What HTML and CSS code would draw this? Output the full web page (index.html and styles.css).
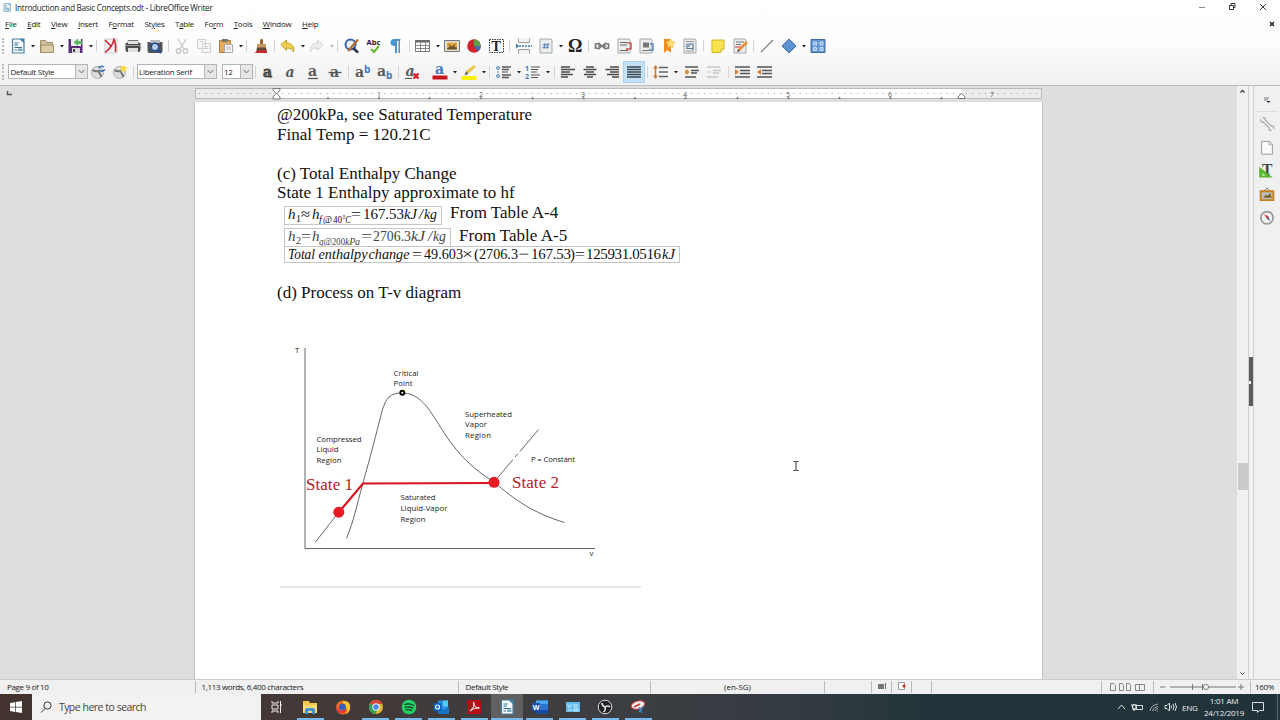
FILE: index.html
```
<!DOCTYPE html>
<html lang="en">

<head>
    <meta charset="UTF-8">
    <title>Introduction and Basic Concepts.odt - LibreOffice Writer</title>
    <link rel="stylesheet" href="styles.css">
</head>

<body>
    <svg class="defs">
        <symbol id="writer" viewBox="0 0 22 22">
            <path d="M5.500 4h8l3.500 3.500V18H5.500z" fill="#f8fbfc" stroke="#4d7f9d" stroke-width="1.200" />
            <path d="M13 3.500h4.500V8z" fill="#2e86b8" />
            <path d="M7.500 8h4M7.500 10h3.500M7.500 12.500h7.500M7.500 15h2.500" stroke="#2f7199" />
            <path d="M11 13.500h4.500V16H11z" fill="#6fa9c6" />
        </symbol>
        <symbol id="doc" viewBox="0 0 22 22">
            <path d="M5 4h11l1 1v13H5z" fill="#eceeee" stroke="#a4a7a8" />
        </symbol>
        <symbol id="arrow" viewBox="0 0 7 22">
            <path d="M2 10h4l-2 2.4z" fill="#222" />
        </symbol>
        <symbol id="chev" viewBox="0 0 12 14">
            <path d="M3 5.5l3 3 3-3" fill="none" stroke="#555" />
        </symbol>
    </svg>

    <!-- Title and menu -->
    <div class="top">
        <div class="titlebar">
            <svg class="app-icon"><use href="#writer" /></svg>
            <span class="title">Introduction and Basic Concepts.odt - LibreOffice Writer</span>
            <svg class="window-buttons" width="76" height="14" fill="none" stroke="#333">
                <path d="M3 7.500h6" stroke="#888" />
                <path d="M33.500 5.500h4v4h-4zM35 5.500v-2h4v4h-1.500" />
                <path d="M64 4l6 6M70 4l-6 6" />
            </svg>
        </div>
        <div class="menubar">
            <span><u>F</u>ile</span><span><u>E</u>dit</span><span><u>V</u>iew</span><span><u>I</u>nsert</span>
            <span>F<u>o</u>rmat</span><span>St<u>y</u>les</span><span>T<u>a</u>ble</span><span>Fo<u>r</u>m</span>
            <span><u>T</u>ools</span><span><u>W</u>indow</span><span><u>H</u>elp</span>
            <svg class="close-doc" width="8" height="8"><path d="M2 2l4 4M6 2l-4 4" stroke="#222" stroke-width="1.5" /></svg>
        </div>

        <!-- Standard toolbar -->
        <div class="toolbar">
            <i class="grip"></i>
            <svg class="ic"><use href="#writer" /></svg>
            <svg class="ar"><use href="#arrow" /></svg>
            <svg class="ic" viewBox="0 0 22 22">
                <path d="M4.500 17.500v-12h5l1 2h6v10z" fill="#cfc09e" stroke="#a08f6a" />
                <path d="M5 17.500V10h12.500v7.500z" fill="#dccdab" stroke="#a08f6a" />
            </svg>
            <svg class="ar"><use href="#arrow" /></svg>
            <svg class="ic" viewBox="0 0 22 22">
                <path d="M3.500 4h14v14h-14z" fill="#5b2d78" />
                <path d="M6 4h10v7H6z" fill="#eceff0" />
                <path d="M7 13h8v5H7z" fill="#ddd" />
                <path d="M8 14h2v3H8z" fill="#444" />
                <path d="M17 6h-4V3.500L8.500 7.500l4.500 3.500V9h4z" fill="#5cb85c" />
            </svg>
            <svg class="ar"><use href="#arrow" /></svg>
            <i class="sep"></i>
            <svg class="ic" viewBox="0 0 22 22">
                <path d="M5 4h12v14H5z" fill="#f4f4f4" stroke="#ccc" />
                <path d="M5 17.500c4-3 8-8 9-13q2 3 1.500 12.500M5 5l6 6" fill="none" stroke="#c8202e" stroke-width="1.500" />
            </svg>
            <svg class="ic" viewBox="0 0 22 22">
                <path d="M6 5h10l1 4H5z" fill="#777" />
                <path d="M3.500 8h15v7l-1 2h-13l-1-2z" fill="#4b4d4f" />
                <path d="M6 6h10v3H6zM6 13h10v4H6z" fill="#dfe1e2" />
                <path d="M4 10.500h14" stroke="#999" />
            </svg>
            <svg class="ic" viewBox="0 0 22 22">
                <path d="M3.500 7h15v9l-1 2h-13l-1-2z" fill="#515559" />
                <path d="M6 5h10v3H6z" fill="#b6babd" />
                <circle cx="11" cy="12" r="3.700" fill="#b8d0ef" stroke="#244f96" stroke-width="1.600" />
                <path d="M14 15l3 3" stroke="#244f96" stroke-width="2" />
            </svg>
            <i class="sep"></i>
            <svg class="ic" viewBox="0 0 22 22" fill="none" stroke="#c9c9c9" stroke-width="1.400">
                <path d="M7 4l6 10M15 4L9 14" />
                <circle cx="7.500" cy="16" r="2.200" /><circle cx="14.500" cy="16" r="2.200" />
            </svg>
            <svg class="ic" viewBox="0 0 22 22" fill="#f7f7f7" stroke="#cfcfcf">
                <path d="M4.500 4.500h8v9h-8zM9.500 8.500h8v9h-8z" />
                <path d="M11.500 11.500h4M11.500 13.500h4M6.500 6.500h4" />
            </svg>
            <svg class="ic" viewBox="0 0 22 22">
                <path d="M4.500 5.500h11v12h-11z" fill="#e2aa5c" stroke="#b87a30" />
                <path d="M7 4h6v3H7z" fill="#777" />
                <path d="M9.500 9.500h8v8h-8z" fill="#f5f5f5" stroke="#aaa" />
                <path d="M11 12h5M11 14h5" stroke="#bbb" />
            </svg>
            <svg class="ar"><use href="#arrow" /></svg>
            <i class="sep"></i>
            <svg class="ic" viewBox="0 0 22 22">
                <path d="M10 4.500q2-1 3 0v5h-3z" fill="#9a6530" />
                <path d="M7 9h9v4H7z" fill="#c99a62" />
                <path d="M7 12.500h9l1 5H6z" fill="#60483a" />
                <path d="M4 18l5-2.500h8V18z" fill="#d8262c" />
            </svg>
            <i class="sep"></i>
            <svg class="ic" viewBox="0 0 22 22">
                <path d="M4 9.500L9.500 5v3c6 0 8 4 7 9-1-3-3-4-7-4v2.500z" fill="#f1cf4e" stroke="#bd9420" stroke-width=".9" />
            </svg>
            <svg class="ar"><use href="#arrow" /></svg>
            <svg class="ic" viewBox="0 0 22 22">
                <path d="M17 9.500L11.500 5v3c-6 0-8 4-7 9 1-3 3-4 7-4v2.500z" fill="#ececec" stroke="#d4d4d4" stroke-width=".9" />
            </svg>
            <svg class="ar faded"><use href="#arrow" /></svg>
            <i class="sep"></i>
            <svg class="ic" viewBox="0 0 22 22">
                <circle cx="9.500" cy="9.500" r="5" fill="#e8eff6" stroke="#3a64a8" stroke-width="2" />
                <path d="M12 13l5 4.500" stroke="#28324a" stroke-width="2.600" />
                <path d="M17 4.500L7 16" stroke="#b5652c" stroke-width="2" />
            </svg>
            <svg class="ic" viewBox="0 0 22 22">
                <text x="3.500" y="10" class="abc">Abc</text>
                <path d="M8 14l3 3 5-6" fill="none" stroke="#63b52f" stroke-width="2" />
            </svg>
            <svg class="ic" viewBox="0 0 22 22">
                <path d="M15.500 4H9.500q-4 0-4 3.500t4.500 3.500V18h2V6h1.500v12h1.500V5.500h.5z" fill="#4a93cc" />
            </svg>
            <i class="sep"></i>
            <svg class="ic" viewBox="0 0 22 22">
                <path d="M3.500 5.500h14v11h-14z" fill="#fff" stroke="#777" />
                <path d="M3 6.500h15" stroke="#666" stroke-width="2" />
                <path d="M3.500 10.500h14M3.500 13.500h14M8.500 6v10M13.500 6v10" stroke="#888" />
            </svg>
            <svg class="ar"><use href="#arrow" /></svg>
            <svg class="ic" viewBox="0 0 22 22">
                <path d="M3.500 5.500h15v11h-15z" fill="#e0e0dd" stroke="#777" />
                <path d="M6 7.500h10v7H6z" fill="#e5a93c" />
                <path d="M6 14.500v-1l3-2-2-3 4 3 4-3.500-2 3.500 3 1v2z" fill="#6c552d" />
            </svg>
            <svg class="ic" viewBox="0 0 22 22">
                <circle cx="11" cy="11" r="6.800" fill="#d3222b" />
                <path d="M11 11V4.200A6.800 6.800 0 0 1 17.800 11z" fill="#54a546" />
                <path d="M11 11h6.800a6.800 6.800 0 0 1-3 5.600z" fill="#3f6db5" />
            </svg>
            <svg class="ic" viewBox="0 0 22 22">
                <path d="M4.500 4.500h14v13h-14z" fill="#fff" stroke="#333" stroke-dasharray="1.500 1" />
                <text x="6.500" y="16" class="big-t">T</text>
            </svg>
            <i class="sep"></i>
            <svg class="ic" viewBox="0 0 22 22">
                <path d="M5.500 3.500v4h11v-4M5.500 18.500v-4h11v4" fill="#f3f3f3" stroke="#999" />
                <path d="M3 11h16" stroke="#3d76ae" stroke-width="1.600" stroke-dasharray="2 1" />
                <path d="M3 8.500l3 2.500-3 2.500z" fill="#3d76ae" />
            </svg>
            <svg class="ic" viewBox="0 0 22 22">
                <use href="#doc" />
                <path d="M10 8l-1 6M13 8l-1 6M8 9.800h6.500M7.500 12.300H14" stroke="#4f7bb0" stroke-width=".9" />
            </svg>
            <svg class="ar"><use href="#arrow" /></svg>
            <svg class="ic" viewBox="0 0 22 22"><text x="4" y="17" class="omega">Ω</text></svg>
            <i class="sep"></i>
            <svg class="ic" viewBox="0 0 22 22" fill="none" stroke="#777" stroke-width="1.700">
                <path d="M4.500 9l3.500-.5 2.500 2.500L8 13.500 4.500 13zM17.500 9l-3.500-.5-2.500 2.500 2.500 2.500 3.500-.5z" /><path d="M7 11h8" />
            </svg>
            <svg class="ic" viewBox="0 0 22 22">
                <use href="#doc" />
                <path d="M7 7.500h7M7 10h7M7 15.500h8" stroke="#666" />
                <path d="M14 8h4v6h-4M14 16v-3" fill="none" stroke="#c8282e" stroke-width="1.200" />
            </svg>
            <svg class="ic" viewBox="0 0 22 22">
                <use href="#doc" />
                <path d="M8 7.500h6v5H8z" fill="#777" />
                <path d="M15 9h3v6h-4" fill="none" stroke="#4a80bd" stroke-width="1.300" />
                <path d="M7 15.500h7" stroke="#777" />
            </svg>
            <svg class="ic" viewBox="0 0 22 22">
                <path d="M7 4h7v14l-3.500-3L7 18z" fill="#ee8e21" />
                <path d="M13.500 4l1.500 2.500 3 .5-2 2.500v3l-2.500-1-2.500 1v-3L9 7l3-.5z" fill="#ffe075" stroke="#f0b23a" stroke-width=".6" />
            </svg>
            <svg class="ic" viewBox="0 0 22 22">
                <use href="#doc" />
                <path d="M7 6.500h8M7 16h8" stroke="#999" />
                <path d="M8 8.500v5h6M10 12V9h4v6" fill="none" stroke="#58779c" stroke-width="1.200" />
            </svg>
            <i class="sep"></i>
            <svg class="ic" viewBox="0 0 22 22">
                <path d="M5 5h12v9l-3.500 3.500H5z" fill="#f8e34d" stroke="#cdb428" />
                <path d="M13.500 17.500V14H17z" fill="#fff5a6" stroke="#cdb428" stroke-width=".7" />
            </svg>
            <svg class="ic" viewBox="0 0 22 22">
                <use href="#doc" />
                <path d="M7 7h8M7 9.500h5" stroke="#777" />
                <path d="M6 12h6" stroke="#d43831" />
                <path d="M18 7l-8 8" stroke="#ed8c3c" stroke-width="2.600" />
                <path d="M8 17l1-3 2 2z" fill="#443" />
            </svg>
            <i class="sep"></i>
            <svg class="ic" viewBox="0 0 22 22"><path d="M5 17L17 5" stroke="#777" stroke-width="1.200" /></svg>
            <svg class="ic" viewBox="0 0 22 22"><path d="M11 4l7 7-7 7-7-7z" fill="#5e91cf" stroke="#3d6da8" /></svg>
            <svg class="ar"><use href="#arrow" /></svg>
            <svg class="ic" viewBox="0 0 22 22">
                <path d="M4 4.500h14v13H4z" fill="#6597d2" stroke="#3d6da8" />
                <path d="M6.500 7h3v3h-3zM13 7h3v3h-3zM6.500 12.500h3v3h-3zM13 12.500h3v3h-3z" fill="#8fb6e2" stroke="#dce9f7" stroke-width=".8" />
            </svg>
        </div>

        <!-- Formatting toolbar -->
        <div class="toolbar format">
            <i class="grip"></i>
            <div class="combo style-name"><span>Default Style</span><svg><use href="#chev" /></svg></div>
            <svg class="ic" viewBox="0 0 22 22">
                <circle cx="10.500" cy="11.500" r="6" fill="#dedede" stroke="#aaa" />
                <path d="M5.500 9q3 2 6 1l3 6" fill="none" stroke="#777" stroke-width="2" />
                <path d="M11.500 7q2.500-3 5.500-1M18 8.500q-3 3-6 .5" fill="none" stroke="#3a70b4" stroke-width="1.500" />
            </svg>
            <svg class="ic" viewBox="0 0 22 22">
                <circle cx="10.500" cy="11.500" r="6" fill="#dedede" stroke="#aaa" />
                <path d="M5.500 9q3 2 6 1l3 6" fill="none" stroke="#777" stroke-width="2" />
                <path d="M14.500 4l1.300 2 2.700.3-1.800 1.900v2.600l-2.200-.9-2.200.9V8.200l-1.800-1.900 2.700-.3z" fill="#f6dc3e" />
            </svg>
            <i class="sep"></i>
            <div class="combo font-name"><span>Liberation Serif</span><svg><use href="#chev" /></svg></div>
            <div class="combo font-size"><span>12</span><svg><use href="#chev" /></svg></div>
            <i class="sep"></i>
            <svg class="ic" viewBox="0 0 22 22"><text x="5" y="16" class="glyph heavy">a</text></svg>
            <svg class="ic" viewBox="0 0 22 22"><text x="5.500" y="16" class="glyph slant">a</text></svg>
            <svg class="ic" viewBox="0 0 22 22"><text x="6" y="15" class="glyph">a</text><path d="M6 17.500h10" stroke="#555" stroke-width="1.300" /></svg>
            <svg class="ic" viewBox="0 0 22 22"><text x="6" y="16" class="glyph">a</text><path d="M4.500 11.500h13" stroke="#555" stroke-width="1.300" /></svg>
            <i class="sep"></i>
            <svg class="ic" viewBox="0 0 22 22"><text x="3" y="16" class="glyph">a</text><text x="12" y="12" class="script">b</text></svg>
            <svg class="ic" viewBox="0 0 22 22"><text x="3" y="15" class="glyph">a</text><text x="12" y="18" class="script">b</text></svg>
            <i class="sep"></i>
            <svg class="ic" viewBox="0 0 22 22"><text x="4.500" y="15" class="glyph slant">a</text><path d="M4 17.500h7" stroke="#555" /><path d="M12.500 12.500l5 5M17.500 12.500l-5 5" stroke="#d8202a" stroke-width="2.400" /></svg>
            <i class="sep blank"></i>
            <svg class="ic" viewBox="0 0 22 22"><text x="6" y="13" class="glyph blue">a</text><path d="M3.500 16.500h15" stroke="#c9141b" stroke-width="4" /></svg>
            <svg class="ar"><use href="#arrow" /></svg>
            <svg class="ic" viewBox="0 0 22 22">
                <path d="M16 4l-8 6 2 3 8-7z" fill="#e6c94c" /><path d="M8 10l2.500 3-4 1.500z" fill="#686868" />
                <path d="M3.500 17h15" stroke="#fdf200" stroke-width="4" />
            </svg>
            <svg class="ar"><use href="#arrow" /></svg>
            <i class="sep wide"></i>
            <svg class="ic" viewBox="0 0 22 22">
                <path d="M9 6h9M9 8.500h7M9 14h9M9 16.500h7" stroke="#555" stroke-width="1.300" />
                <circle cx="5" cy="7" r="1.400" fill="#fff" stroke="#3c78b4" /><circle cx="5" cy="15" r="1.400" fill="#fff" stroke="#3c78b4" /><circle cx="5" cy="11" r=".8" fill="#3c78b4" />
                <path d="M9 11h6" stroke="#555" />
            </svg>
            <svg class="ar"><use href="#arrow" /></svg>
            <svg class="ic" viewBox="0 0 22 22">
                <text x="3" y="10" class="num">1</text><text x="3" y="18" class="num">2</text>
                <path d="M9 6h9M9 8.500h7M9 11h6M9 14h9M9 16.500h7" stroke="#555" stroke-width="1.200" />
            </svg>
            <svg class="ar"><use href="#arrow" /></svg>
            <i class="sep"></i>
            <svg class="ic" viewBox="0 0 22 22"><path d="M4 6h9M4 8.500h14M4 11h9M4 13.500h12M4 16h7" stroke="#4a4a4a" stroke-width="1.400" /></svg>
            <svg class="ic" viewBox="0 0 22 22"><path d="M7 6h8M4.500 8.500h13M7 11h8M5 13.500h12M8 16h6" stroke="#4a4a4a" stroke-width="1.400" /></svg>
            <svg class="ic" viewBox="0 0 22 22"><path d="M9 6h9M4.500 8.500h13.500M9 11h9M6 13.500h12M11 16h7" stroke="#4a4a4a" stroke-width="1.400" /></svg>
            <svg class="ic active" viewBox="0 0 22 22"><path d="M4 6h14M4 8.500h14M4 11h14M4 13.500h14M4 16h14" stroke="#3c4650" stroke-width="1.400" /></svg>
            <i class="sep"></i>
            <svg class="ic" viewBox="0 0 22 22">
                <path d="M9 6.500h9M9 11h9M9 15.500h9" stroke="#666" stroke-width="1.400" />
                <path d="M5.500 7v8" stroke="#d0762c" stroke-width="1.500" /><path d="M5.500 4L3 7.500h5zM5.500 18L3 14.500h5z" fill="#d0762c" />
            </svg>
            <svg class="ar"><use href="#arrow" /></svg>
            <i class="sep blank small"></i>
            <svg class="ic" viewBox="0 0 22 22"><path d="M4 6h13M10 9.500h8M10 12h6M4 16h11" stroke="#555" stroke-width="1.400" /><path d="M6 8l2.500 3L6 14l-2.500-3z" fill="#e08a35" /></svg>
            <svg class="ic faded" viewBox="0 0 22 22"><path d="M4 6h13M10 9.500h8M10 12h6M4 16h11" stroke="#777" stroke-width="1.300" /><path d="M4 11h4" stroke="#777" /></svg>
            <i class="sep"></i>
            <svg class="ic" viewBox="0 0 22 22"><path d="M4 6h15M9 9.500h10M9 12.500h10M4 16h15" stroke="#555" stroke-width="1.500" /><path d="M4 8l4 3-4 3z" fill="#e0782c" /></svg>
            <svg class="ic" viewBox="0 0 22 22"><path d="M4 6h15M9 9.500h10M9 12.500h10M4 16h15" stroke="#555" stroke-width="1.500" /><path d="M8 8l-4 3 4 3z" fill="#e0782c" /></svg>
        </div>
    </div>

    <!-- Document area -->
    <div class="workspace">
        <div class="canvas">
            <div class="ruler-row">
                <svg class="tab-mark" width="8" height="8"><path d="M1.500 1v3.500H6" fill="none" stroke="#555" stroke-width="1.500" /></svg>
                <svg class="ruler" width="847" height="12">
                    <rect x=".5" y=".5" width="846" height="10" fill="#fff" stroke="#bbb" />
                    <path d="M1 1h80v9H1zM767 1h79v9h-79z" fill="#ececec" />
                    <path d="M4 5.500h840" stroke="#999" stroke-dasharray="1 5.390" />
                    <path d="M181 2h6v7h-6zM283 2h6v7h-6zM385 2h6v7h-6zM487 2h6v7h-6zM590 2h6v7h-6zM692 2h6v7h-6z" fill="#fff" />
                    <g class="ruler-num">
                        <text x="184" y="8.500">1</text><text x="286" y="8.500">2</text><text x="388" y="8.500">3</text>
                        <text x="490" y="8.500">4</text><text x="593" y="8.500">5</text><text x="695" y="8.500">6</text><text x="797" y="8.500">7</text>
                    </g>
                    <path d="M131.500 11l1.500-2.500 1.500 2.500zM182.500 11l1.500-2.500 1.500 2.500zM233 11l1.500-2.500 1.500 2.500zM284.500 11l1.500-2.500 1.500 2.500zM336 11l1.500-2.500 1.500 2.500zM387 11l1.500-2.500 1.500 2.500zM438.500 11l1.500-2.500 1.500 2.500zM489 11l1.500-2.500 1.500 2.500zM541 11l1.500-2.500 1.500 2.500zM592 11l1.500-2.500 1.500 2.500zM643 11l1.500-2.500 1.500 2.500zM694 11l1.500-2.500 1.500 2.500zM745 11l1.500-2.500 1.500 2.500z" fill="#777" />
                    <path d="M78 .5h7v1.500l-3 3.500 3 3.500v2h-7V9l3-3.500-3-3.500z" fill="#fff" stroke="#777" />
                    <path d="M763 10.500V9l3.500-3.500L770 9v1.500z" fill="#fff" stroke="#777" />
                </svg>
            </div>
            <div class="page">
                <p>@200kPa, see Saturated Temperature</p>
                <p>Final Temp = 120.21C</p>
                <p>&nbsp;</p>
                <p>(c) Total Enthalpy Change</p>
                <p>State 1 Enthalpy approximate to hf</p>
                <div class="eq-row first">
                    <svg class="formula" width="158" height="19">
                        <g class="it"><text x="4" y="13">h</text><text x="28" y="13">h</text><text x="120" y="13" textLength="13" lengthAdjust="spacingAndGlyphs">kJ</text><text x="135" y="13">/</text><text x="140" y="13" textLength="13" lengthAdjust="spacingAndGlyphs">kg</text></g>
                        <text x="12" y="16" class="sub">1</text>
                        <text x="17" y="13" textLength="9" lengthAdjust="spacingAndGlyphs">≈</text>
                        <text x="35" y="17" class="sub it" textLength="13">f@</text><text x="49" y="17" class="sub" textLength="9" lengthAdjust="spacingAndGlyphs">40</text><text x="58" y="17" class="sub it" textLength="9" lengthAdjust="spacingAndGlyphs">°C</text>
                        <text x="67" y="13" textLength="10" lengthAdjust="spacingAndGlyphs">=</text>
                        <text x="79" y="13" textLength="41">167.53</text>
                    </svg>
                    <span>From Table A-4</span>
                </div>
                <div class="eq-row second">
                    <svg class="formula light" width="167" height="19">
                        <g class="it"><text x="4" y="13">h</text><text x="28" y="13">h</text><text x="127" y="13" textLength="14" lengthAdjust="spacingAndGlyphs">kJ</text><text x="144" y="13">/</text><text x="149" y="13" textLength="13" lengthAdjust="spacingAndGlyphs">kg</text></g>
                        <text x="12" y="16" class="sub">2</text>
                        <text x="17" y="13" textLength="10" lengthAdjust="spacingAndGlyphs">=</text>
                        <text x="35" y="17" class="sub it" textLength="13" lengthAdjust="spacingAndGlyphs">g@</text><text x="48" y="17" class="sub" textLength="13" lengthAdjust="spacingAndGlyphs">200</text><text x="61" y="17" class="sub it" textLength="15">kPa</text>
                        <text x="77" y="13" textLength="11" lengthAdjust="spacingAndGlyphs">=</text>
                        <text x="89" y="13" textLength="38" lengthAdjust="spacingAndGlyphs">2706.3</text>
                    </svg>
                    <span>From Table A-5</span>
                </div>
                <div class="eq-row third">
                    <svg class="formula" width="396" height="17">
                        <g class="it"><text x="4" y="13" textLength="27" lengthAdjust="spacingAndGlyphs">Total</text><text x="34.500" y="13" textLength="49" lengthAdjust="spacingAndGlyphs">enthalpy</text><text x="84.500" y="13" textLength="41" lengthAdjust="spacingAndGlyphs">change</text><text x="378" y="13" textLength="13" lengthAdjust="spacingAndGlyphs">kJ</text></g>
                        <text x="128" y="13" textLength="10" lengthAdjust="spacingAndGlyphs">=</text>
                        <text x="140" y="13" textLength="39" lengthAdjust="spacingAndGlyphs">49.603</text>
                        <text x="178" y="13" textLength="11" lengthAdjust="spacingAndGlyphs">×</text>
                        <text x="190" y="13">(</text><text x="195" y="13" textLength="39" lengthAdjust="spacingAndGlyphs">2706.3</text>
                        <text x="234" y="13" textLength="11" lengthAdjust="spacingAndGlyphs">−</text>
                        <text x="247" y="13" textLength="40">167.53</text><text x="286" y="13">)</text>
                        <text x="291" y="13" textLength="10" lengthAdjust="spacingAndGlyphs">=</text>
                        <text x="302" y="13" textLength="75">125931.0516</text>
                    </svg>
                </div>
                <p class="part-d">(d) Process on T-v diagram</p>

                <!-- T-v diagram -->
                <svg class="diagram" viewBox="280 335 361 253" width="361" height="253">
                    <g fill="none" stroke="#666">
                        <path d="M305 348v200.500h290" />
                        <path d="M346.500 538.500C354 520 356 508 363 483C371 454 376 435 382 411C386 398 390 393 402 393C417 393 426 404 436 420C452 446 465 464 494 482C515 500 533 513 564.500 522.500" />
                        <path d="M315.500 542L338 513M494 482l19-22.500M515 457l3-3.500M520 451.500l18.500-22" />
                    </g>
                    <path d="M339 512l24-28.500 131-.5" fill="none" stroke="#d9141f" stroke-width="2.200" />
                    <circle cx="338.800" cy="512.200" r="5.500" fill="#e81a25" />
                    <circle cx="494" cy="482.300" r="5.500" fill="#e81a25" />
                    <circle cx="402.300" cy="392.700" r="2" fill="#fff" stroke="#000" stroke-width="1.900" />
                    <g class="label">
                        <text x="295" y="353">T</text><text x="589.500" y="556">v</text>
                        <text x="393.500" y="376" textLength="25">Critical</text><text x="393.500" y="386" textLength="19">Point</text>
                        <text x="465" y="416.500" textLength="47">Superheated</text><text x="465" y="427" textLength="22">Vapor</text><text x="465" y="437.500" textLength="26">Region</text>
                        <text x="316.500" y="442" textLength="45">Compressed</text><text x="316.500" y="452" textLength="22">Liquid</text><text x="316.500" y="463" textLength="25">Region</text>
                        <text x="531" y="462" textLength="44">P = Constant</text>
                        <text x="400.500" y="500" textLength="35">Saturated</text><text x="400.500" y="510.500" textLength="47">Liquid-Vapor</text><text x="400.500" y="521.500" textLength="25">Region</text>
                    </g>
                    <text x="306" y="490" class="state" textLength="47">State 1</text>
                    <text x="512" y="488" class="state" textLength="47">State 2</text>
                    <path d="M280 587h361" stroke="#ddd" stroke-width="1.500" />
                </svg>
            </div>
            <svg class="ibeam" width="8" height="12"><path d="M1.500 1.500h2l.5.500.5-.500h2M4 2v8M1.500 10.500h2l.5-.500.5.500h2" fill="none" stroke="#333" /></svg>
        </div>
        <div class="scrollbar">
            <svg width="10" height="10"><path d="M3.500 6.500l2-2 2 2" fill="none" stroke="#444" stroke-width="1.300" /></svg>
            <div class="thumb"></div>
            <svg width="10" height="10"><path d="M3.500 3.500l2 2 2-2" fill="none" stroke="#444" /></svg>
        </div>
        <div class="splitter"><i></i></div>
        <div class="sidebar">
            <svg viewBox="0 0 16 24"><path d="M5 11.500h5M5 13.500h4" stroke="#778" /><path d="M7.500 14.500h4l-2 2z" fill="#223" /></svg>
            <hr>
            <svg viewBox="0 0 16 24">
                <path d="M4.500 8.500L12 16" stroke="#999" stroke-width="3.800" /><circle cx="4" cy="8" r="3" fill="#999" /><circle cx="12.500" cy="16.500" r="3" fill="#999" />
                <path d="M4.500 8.500L12 16" stroke="#eee" stroke-width="2" /><circle cx="4" cy="8" r="2" fill="#eee" /><circle cx="12.500" cy="16.500" r="2" fill="#eee" />
                <path d="M0 4l4 4M13 17l3 4" stroke="#f0f0f0" stroke-width="2.600" />
            </svg>
            <svg viewBox="0 0 16 24"><path d="M2.500 5.500h8l3 3v10h-11z" fill="#fafafa" stroke="#999" /><path d="M10 5.500v3.500h3.500" fill="none" stroke="#aaa" /></svg>
            <svg viewBox="0 0 16 24"><text x="3" y="16.500" class="side-t">T</text><path d="M0 8l14 11H0z" fill="#5bb62f" /><path d="M3 14l4 3H3z" fill="#b7e59a" /></svg>
            <svg viewBox="0 0 16 24"><path d="M5 8l3-3 3 3" fill="none" stroke="#777" /><path d="M1.500 8.500h13v9h-13z" fill="#b9c0bd" stroke="#c6811c" stroke-width="2" /><path d="M4 15l3-3 2 1 2-3 2 5z" fill="#7c6331" /></svg>
            <svg viewBox="0 0 16 24"><circle cx="8" cy="12" r="6.300" fill="#f4f4f4" stroke="#999" stroke-width="1.800" /><path d="M5 8.500l4.500 2-2 2z" fill="#d33" /><path d="M11 15.500l-3.500-3 2-2z" fill="#558" /></svg>
        </div>
    </div>

    <!-- Status bar -->
    <div class="statusbar">
        <span>Page 9 of 10</span><span>1,113 words, 6,400 characters</span><span>Default Style</span><span class="lang">(en-SG)</span><span></span>
        <span><svg width="12" height="10"><path d="M2 3h6v5H2z" fill="#777" /><path d="M9.500 2v6" stroke="#666" /></svg></span>
        <span><svg width="12" height="10"><path d="M2.500 1.500h6v7h-6z" fill="#fff" stroke="#999" /><circle cx="8" cy="5" r="1.500" fill="#c22" /></svg></span>
        <span></span><span></span>
        <span><svg width="42" height="12" fill="none" stroke="#888"><path d="M4.500 2.500h3l2 2v5h-5zM13.500 2.500h3l1 2v5h-4zM20.500 2.500h3l1 2v5h-4zM29.500 3.500h4v6h-4zM33.500 3.500h5v6h-5z" /></svg></span>
        <span><svg width="96" height="12" stroke="#777"><path d="M6 6h5.500M84 6h6M87 3v6M16 6h66M38.500 3v6M48.500 3v6" /><circle cx="52" cy="6" r="2.500" fill="#fff" /></svg></span>
        <span class="zoom">160%</span>
    </div>

    <!-- Windows taskbar -->
    <div class="taskbar">
        <div class="start"><svg width="12" height="12" fill="#fff"><path d="M0 2l5-.8v4.500H0zM5.700 1l6.300-1v5.700H5.700zM0 6.400h5v4.500L0 10zM5.700 6.400H12V12l-6.300-1z" /></svg></div>
        <div class="search">
            <svg width="12" height="12" fill="none" stroke="#333"><circle cx="7.500" cy="4.500" r="3.600" /><path d="M5 7.500L1 11.500" /></svg>
            <span>Type here to search</span>
        </div>
        <div class="apps">
            <div class="app"><svg viewBox="0 0 18 18" fill="none" stroke="#eee"><path d="M4 3v2h6V3M4 7h6v4H4zM4 15v-2h6v2M12.500 3v12M12 7h2" /></svg></div>
            <div class="app open"><svg viewBox="0 0 18 18"><path d="M2 3h6l1 2h7v10H2z" fill="#f5c74b" /><path d="M2 7h14v8H2z" fill="#fbd976" /><path d="M4 16v-4q0-2 2-2h6q2 0 2 2v4h-3v-3H7v3z" fill="#3e94d4" /></svg></div>
            <div class="app"><svg viewBox="0 0 18 18"><circle cx="9" cy="9.500" r="7" fill="#f36d21" /><path d="M9 3q8-1 7 8-1 4-4 5 3-6-3-9z" fill="#ffc42e" /><circle cx="8.500" cy="9" r="3.500" fill="#3e5bbd" /><path d="M2 7q1 6 7 6l4-2q-2 5-7 4-4-2-4-8z" fill="#e62f40" /></svg></div>
            <div class="app open"><svg viewBox="0 0 18 18"><circle cx="9" cy="9" r="7" fill="#e5b932" /><path d="M9 9l-6-3.700A7 7 0 0 0 8.500 16l2.500-5z" fill="#2fa35a" /><path d="M3 5.300A7 7 0 0 1 15.300 6H9v3z" fill="#dc4437" /><circle cx="9" cy="9" r="3.300" fill="#4788ef" stroke="#fff" /></svg></div>
            <div class="app open"><svg viewBox="0 0 18 18"><circle cx="9" cy="9" r="7.300" fill="#20d264" /><path d="M4.500 6.500q5-1.500 9.500 1M5 9.300q4-1.200 8 .9M5.500 12q3.500-1 6.500.8" fill="none" stroke="#17352a" stroke-width="1.300" /></svg></div>
            <div class="app open"><svg viewBox="0 0 18 18"><path d="M6 2.500h10v13H6z" fill="#2a91de" /><path d="M11 2.500h5v6h-5z" fill="#50c9f5" /><path d="M6 9l5 3 6-3v7H6z" fill="#1674c6" /><path d="M1.500 5h8v8h-8z" fill="#0b62bb" /><circle cx="5.500" cy="9" r="2" fill="none" stroke="#fff" stroke-width="1.200" /></svg></div>
            <div class="app open"><svg viewBox="0 0 18 18"><path d="M2 2h14v14H2z" fill="#b80d14" /><path d="M5 13q5-4 4-8-1-2-.5 0 1 5 6 5-5-1-9.500 3z" fill="none" stroke="#fff" /></svg></div>
            <div class="app open current"><svg viewBox="2 2 18 18"><use href="#writer" width="22" height="22" /></svg></div>
            <div class="app open"><svg viewBox="0 0 18 18"><path d="M5 2.500h12v13H5z" fill="#2b73cf" /><path d="M5 2.500h12V6H5z" fill="#4aa6ef" /><path d="M5 12h12v3.500H5z" fill="#174a9e" /><path d="M1 5h8v8H1z" fill="#1951ae" /><text x="1.800" y="11.500" class="word">W</text></svg></div>
            <div class="app open"><svg viewBox="0 0 18 18"><path d="M2 4h14v10H2z" fill="#61bced" /><path d="M3.500 6l2 4 2-4M9 7h5M9 9h5M4 12h4M10 11h4v2h-4z" fill="none" stroke="#d9f0fc" stroke-width=".9" /></svg></div>
            <div class="app open"><svg viewBox="0 0 18 18"><circle cx="9" cy="9" r="6.800" fill="#242426" stroke="#ddd" /><path d="M9 9q-3-1-3-4M9 9q3-2 5 0M9 9q1 3-1.500 5" fill="none" stroke="#ddd" stroke-width="1.600" /></svg></div>
            <div class="app open"><svg viewBox="0 0 18 18"><ellipse cx="9" cy="7" rx="7" ry="4" fill="#eee" stroke="#c33" transform="rotate(-15 9 7)" /><path d="M5 9l6-3" stroke="#c33" stroke-width="1.500" /><path d="M10 9l3 6M14 9l-4 5" stroke="#3c8fd0" stroke-width="1.300" /></svg></div>
        </div>
        <div class="tray">
            <svg width="66" height="14" fill="none" stroke="#ddd">
                <path d="M2 9l3.500-4L9 9" />
                <path d="M20.500 5.500h6v4h-6z" /><path d="M16 5h4v4h-3zM18 9v2" stroke-width="1.300" />
                <path d="M34 11q1-6 8-7M36.500 11q1-4 5.500-4.500M39 11q.5-2 3-2.500M41 11h1" stroke="#aaa" />
                <path d="M49 5.500h2l2.500-2.500v8L51 8.500h-2zM55 5.500q1 1.500 0 3M57 4q2 3 0 6M59 3q3 4 0 8" />
            </svg>
            <span class="eng">ENG</span>
            <div class="clock">1:01 AM<br>24/12/2019</div>
            <svg class="notice" width="14" height="12" fill="none" stroke="#ddd"><path d="M1.500 1.500h11v8H8.500l-2 2v-2h-5z" /></svg>
        </div>
    </div>
</body>

</html>
```
FILE: styles.css
```
/* styles.css */
* {
    margin: 0;
    padding: 0;
    box-sizing: border-box;
}

body {
    width: 1280px;
    height: 720px;
    overflow: hidden;
    display: flex;
    flex-direction: column;
    font-family: "Open Sans", "Noto Sans", sans-serif;
    font-size: 8px;
    letter-spacing: -0.25px;
    color: #222;
    white-space: nowrap;
}

svg {
    display: block;
    flex: none;
    letter-spacing: 0;
}

.defs {
    width: 0;
    height: 0;
    position: absolute;
}

/* Title, menu and toolbars */
.top {
    height: 86px;
    flex: none;
    background: linear-gradient(#fff 0, #fdfdfd 50%, #f0f0f0 100%);
    border-bottom: 1px solid #bdbdbd;
}

.titlebar {
    height: 14px;
    display: flex;
    align-items: center;
    padding-left: 1px;
}

.app-icon {
    width: 12px;
    height: 13px;
    margin-right: 2px;
}

.title {
    font-size: 8.2px;
    letter-spacing: -0.28px;
}

.window-buttons {
    margin-left: auto;
    margin-right: 8px;
}

.menubar {
    height: 19px;
    display: flex;
    align-items: center;
    padding-left: 5px;
    gap: 10.5px;
}

.menubar u {
    text-underline-offset: 1px;
}

.close-doc {
    margin-left: auto;
    margin-right: 4px;
}

.toolbar {
    height: 25px;
    display: flex;
    align-items: center;
}

.format {
    height: 27px;
}

.grip {
    width: 2px;
    height: 16px;
    margin: 0 3px 0 2px;
    border-left: 2px dotted #bbb;
}

.ic {
    width: 22px;
    height: 22px;
}

.ar {
    width: 7px;
    height: 22px;
}

.sep {
    width: 1px;
    height: 12px;
    margin: 0 2.25px;
    background: #d4d4d4;
}

.sep.blank {
    background: none;
}

.sep.wide {
    margin-right: 3.5px;
}

.sep.small {
    margin: 0 0 0 1px;
}

.faded {
    opacity: 0.35;
}

.active {
    background: #c4e1f6;
    outline: 1px solid #a8d3f2;
    outline-offset: -1px;
}

.combo {
    height: 15px;
    display: flex;
    align-items: center;
    justify-content: space-between;
    background: #fff;
    border: 1px solid #b5b5b5;
    padding-left: 1.5px;
}

.combo svg {
    width: 12px;
    height: 13px;
    background: #e6e6e6;
    border-left: 1px solid #b5b5b5;
}

.style-name {
    width: 80px;
    margin-left: 1px;
}

.format .style-name + .ic {
    margin-left: -1px;
}

.font-name {
    width: 80px;
    margin-right: 5px;
}

.font-size {
    width: 31px;
}

.glyph {
    font: bold 14px "DejaVu Serif", serif;
    fill: #5a5a5a;
}

.glyph.heavy {
    stroke: #444;
    stroke-width: 0.8px;
}

.glyph.slant {
    font-style: italic;
}

.glyph.blue {
    fill: #3f78bb;
}

.script {
    font: bold 10px "Open Sans", sans-serif;
    fill: #3f78bb;
}

.num {
    font: bold 7px "Open Sans", sans-serif;
    fill: #3f78bb;
}

.abc {
    font: bold 7.5px "Open Sans", sans-serif;
    fill: #222;
}

.big-t {
    font: bold 14px "Liberation Serif", serif;
    fill: #222;
}

.omega {
    font: bold 18px "Liberation Serif", serif;
    fill: #222;
}

/* Document */
.workspace {
    height: 593px;
    flex: none;
    display: flex;
    background: #dedede;
}

.canvas {
    width: 1237px;
    position: relative;
    overflow: hidden;
}

.ruler-row {
    height: 16px;
    display: flex;
    align-items: flex-start;
    padding-top: 2px;
}

.tab-mark {
    margin: 2px 181px 0 6px;
}

.ruler-num {
    font: 7px "Open Sans", sans-serif;
    fill: #555;
    text-anchor: middle;
}

.page {
    width: 849px;
    height: 577px;
    margin-left: 194px;
    padding: 3px 0 0 82px;
    background: #fff;
    border: solid #c4c4c4;
    border-width: 0 1px;
    font-family: "Liberation Serif", serif;
    font-size: 17.03px;
    line-height: 19.6px;
    letter-spacing: 0;
    color: #111;
}

.eq-row {
    display: flex;
    margin-left: 7px;
    gap: 8px;
}

.first {
    margin-top: 3px;
    height: 22px;
}

.second {
    height: 18px;
}

.eq-row span {
    margin-top: -3px;
}

.second span {
    margin-top: -2px;
}

.formula {
    font-size: 15px;
    outline: 1px solid #c6c6c6;
    outline-offset: -1px;
    fill: #111;
}

.formula.light {
    fill: #444;
}

.it {
    font-style: italic;
}

.sub {
    font-size: 10px;
}

.part-d {
    margin-top: 20px;
}

.diagram {
    margin: 32px 0 0 3px;
}

.label {
    font: 7.8px "Open Sans", sans-serif;
    fill: #222;
}

.state {
    fill: #b5202a;
    font-size: 17px;
}

.ibeam {
    position: absolute;
    left: 792px;
    top: 374px;
}

.scrollbar {
    width: 11px;
    display: flex;
    flex-direction: column;
    background: #f1f1f1;
}

.scrollbar .thumb {
    height: 27px;
    margin: 367px 0 auto 1px;
    background: #cbcbcb;
}

.splitter {
    width: 6px;
    background: #f2f2f2;
    border: solid #d0d0d0;
    border-width: 0 1px;
}

.splitter i {
    display: block;
    height: 49px;
    margin-top: 271px;
    background: #5c5c5c linear-gradient(#fff, #fff) 0 24px / 2px 3px no-repeat;
}

.sidebar {
    width: 26px;
    background: #f0f0f0;
    display: flex;
    flex-direction: column;
    align-items: center;
}

.sidebar hr {
    width: 22px;
    border: 0;
    border-top: 1px solid #ddd;
}

.sidebar svg {
    width: 16px;
    height: 23.5px;
}

.sidebar svg:first-child {
    height: 25px;
}

.side-t {
    font: bold 16px "Liberation Serif", serif;
    fill: #444;
}

/* Status bar */
.statusbar {
    height: 15px;
    flex: none;
    display: grid;
    grid-template-columns: 196px 263px 192px 174px 47px 20px 20px 20px 170px 52px 97px 29px;
    align-items: center;
    background: #f0f0f0;
    border-top: 1px solid #ccc;
    letter-spacing: -0.33px;
}

.statusbar span {
    height: 12px;
    line-height: 12px;
    padding-left: 5.5px;
    border-right: 1px solid #bbb;
}

.statusbar span:first-child {
    padding-left: 7px;
}

.statusbar span:nth-child(3) {
    padding-left: 6.5px;
}

.statusbar span:has(svg) {
    padding-left: 4px;
}

.statusbar span:nth-child(11) {
    padding-left: 0;
}

.statusbar .lang {
    padding: 0;
    text-align: center;
    letter-spacing: 0;
}

.statusbar .zoom {
    padding-left: 4px;
    border: 0;
}

/* Taskbar */
.taskbar {
    height: 26px;
    flex: none;
    display: flex;
    background: linear-gradient(90deg, #42332f 0, #433937 25%, #3c3e42 48%, #343b42 62%, #23353a 72%, #21333a 100%);
    color: #eee;
}

.start {
    width: 32px;
    display: flex;
    align-items: center;
    justify-content: center;
}

.search {
    width: 229px;
    display: flex;
    align-items: center;
    gap: 7px;
    padding-left: 8px;
    background: #f2f2f2;
    color: #444;
    font-size: 10.5px;
    letter-spacing: -0.6px;
}

.search span {
    word-spacing: 0.5px;
}

.apps {
    display: flex;
}

.app {
    width: 32.8px;
    display: flex;
    align-items: center;
    justify-content: center;
    background: linear-gradient(#76b9ed, #76b9ed) center bottom / 0 2px no-repeat;
}

.app.open {
    background-size: 27px 2px;
}

.app.current {
    background-color: rgba(255, 255, 255, 0.18);
    background-size: 100% 2px;
}

.app svg {
    width: 18px;
    height: 18px;
}

.word {
    font: bold 7px "Open Sans", sans-serif;
    fill: #fff;
}

.tray {
    margin-left: auto;
    margin-right: 2px;
    padding-right: 12px;
    border-right: 1px solid #5b676b;
    display: flex;
    align-items: center;
}

.eng {
    width: 18px;
}

.clock {
    width: 46px;
    margin-right: 5px;
    padding-left: 2px;
    text-align: center;
    line-height: 12.5px;
}
```
